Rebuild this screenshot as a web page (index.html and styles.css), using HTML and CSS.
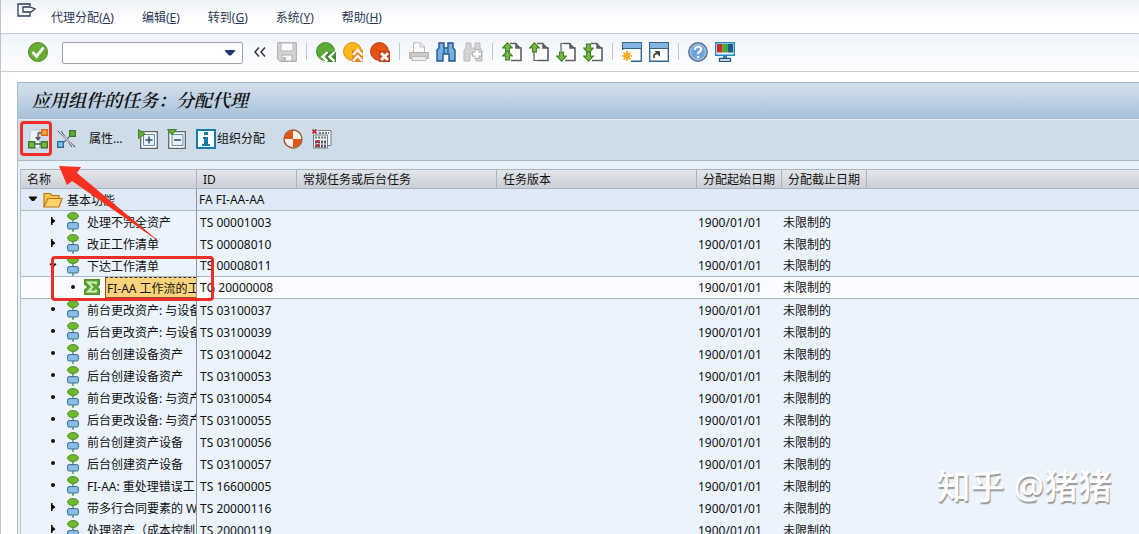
FILE: index.html
```html
<!DOCTYPE html>
<html lang="zh-CN">
<head>
<meta charset="utf-8">
<title>应用组件的任务：分配代理</title>
<link rel="stylesheet" href="styles.css">
</head>
<body>
<svg class="defs" aria-hidden="true">
  <symbol id="task" viewBox="0 0 12 20"><path d="M6 7v4M6 17v3" stroke="#5d8f35" stroke-width="1.4"/><ellipse cx="6" cy="4" rx="5.4" ry="3.4" fill="#72b82c" stroke="#4d8a2c"/><rect x=".6" y="10.6" width="10.8" height="6.4" rx="1.5" fill="#8abce6" stroke="#3b6c9c"/></symbol>
  <symbol id="page" viewBox="0 0 20 20"><path d="M7 1h7l5 5v13H7" fill="#fff"/><path d="M8 1.5h6M14 1v5h5v12.500H9" fill="none" stroke="#5b5f63" stroke-width="1.6"/><path d="M14 1l5 5h-5z" fill="#5b5f63"/></symbol>
  <symbol id="pagefull" viewBox="0 0 20 20"><use href="#page"/><path d="M5 9v9.500h5" fill="none" stroke="#5b5f63" stroke-width="1.2"/></symbol>
  <symbol id="up" viewBox="0 0 10 10"><path d="M5 .7l4.300 4.600H6.800V9H3.200V5.300H.7z" fill="#7bb843" stroke="#3f8228"/></symbol>
  <symbol id="down" viewBox="0 0 10 10"><path d="M5 9.300L.7 4.700h2.500V1h3.600v3.700h2.500z" fill="#7bb843" stroke="#3f8228"/></symbol>
  <symbol id="closed" viewBox="0 0 8 10"><path d="M2 1h1.500v1.500L6.500 5l-3 2.500V9H2z" fill="#111"/></symbol>
  <symbol id="open" viewBox="0 0 10 6"><path d="M1 .5h8v1L6 5H4L1 1.500z" fill="#111"/></symbol>
</svg>

<div class="window">
  <nav class="menu">
    <button class="sysmenu" aria-label="系统菜单"><svg width="20" height="16" viewBox="0 0 20 16"><path d="M13 3V1H1v12h12v-3M6 4h7l5 2-4 3H6z" fill="none" stroke="#2c3c5c" stroke-width="1.300"/></svg></button>
    <button>代理分配(<u>A</u>)</button>
    <button>编辑(<u>E</u>)</button>
    <button>转到(<u>G</u>)</button>
    <button>系统(<u>Y</u>)</button>
    <button>帮助(<u>H</u>)</button>
  </nav>

  <div class="toolbar">
    <button aria-label="确认"><svg width="20" height="20" viewBox="0 0 20 20"><circle cx="10" cy="10" r="9.500" fill="#66ad32" stroke="#55852d"/><path d="M4.500 10l4 4.300L15.500 5.500" fill="none" stroke="#fff" stroke-width="2.800"/></svg></button>
    <div class="command"><input type="text" aria-label="命令"><button aria-label="历史"><svg width="10" height="6" viewBox="0 0 10 6"><path d="M0 0h10v1L6 5.500H4L0 1z" fill="#22376b"/></svg></button></div>
    <button class="collapse" aria-label="收起"><svg width="12" height="10" viewBox="0 0 12 10"><path d="M5 .5L1 5l4 4.500M11 .5L7 5l4 4.500" fill="none" stroke="#333" stroke-width="1.500"/></svg></button>
    <button aria-label="保存"><svg width="20" height="20" viewBox="0 0 20 20"><path d="M.7.7h18.600v18.600H3L.7 17z" fill="#d3d3d5" stroke="#a5a5a9"/><path d="M4 1h12v8H4z" fill="#fafafa" stroke="#b6b6b8"/><path d="M5 13h10v6H5z" fill="#fff" stroke="#aaa"/><path d="M6 15h3v4H6z" fill="#bbb"/></svg></button>
    <span class="sep"></span>
    <button aria-label="返回"><svg width="20" height="20" viewBox="0 0 20 20"><circle cx="9.500" cy="9.500" r="9" fill="#5bab36" stroke="#468a2f"/><path d="M10 10h10v10H10z" fill="#3d862c"/><path d="M11.500 10L6.500 14.700l5 4.600M18.500 10l-5 4.700 5 4.600" fill="none" stroke="#fff" stroke-width="2.400"/></svg></button>
    <button aria-label="退出"><svg width="20" height="20" viewBox="0 0 20 20"><circle cx="9.500" cy="9.500" r="9" fill="#fcb817" stroke="#dc8a20"/><path d="M9 8h11v12H9z" fill="#e78822"/><path d="M10 13l4.700-5 4.700 5M10 19l4.700-5 4.700 5" fill="none" stroke="#fff" stroke-width="2.300"/></svg></button>
    <button aria-label="取消"><svg width="20" height="20" viewBox="0 0 20 20"><circle cx="9.500" cy="9.500" r="9" fill="#e25213" stroke="#bd431a"/><path d="M9 9h11v11H9z" fill="#c23c15"/><path d="M11 11l7 7M18 11l-7 7" stroke="#fff" stroke-width="3"/></svg></button>
    <span class="sep"></span>
    <button aria-label="打印"><svg width="20" height="20" viewBox="0 0 20 20"><path d="M4.500 11V.7h7l4 4V11M11 1v4h4" fill="#fafafa" stroke="#bbb"/><path d="M.7 10.500h18.600v6H.7z" fill="#ccc" stroke="#aaa"/><path d="M3 14.500h14v4H3z" fill="#eee" stroke="#bbb"/></svg></button>
    <button aria-label="查找"><svg width="20" height="20" viewBox="0 0 20 20"><path d="M1 19V8l2-2V1h5v5h4V1h5v5l2 2v11h-6v-7H7v7z" fill="#78afe0" stroke="#22588b" stroke-width="1.400"/><path d="M8 7v5M12 7v5" stroke="#2b669b" stroke-width="1.500"/></svg></button>
    <button aria-label="继续查找"><svg width="20" height="20" viewBox="0 0 20 20"><path d="M1 19V8l2-2V1h5v5h4V1h5v5l2 2v11h-6v-7H7v7z" fill="#d5d5d6" stroke="#b8b8ba"/><path d="M14 7v10M9 12h10" stroke="#b0b0b2" stroke-width="5"/><path d="M14 8v8M10 12h8" stroke="#fff" stroke-width="3"/></svg></button>
    <span class="sep"></span>
    <button aria-label="首页"><svg width="20" height="20"><use href="#page"/><use href="#up" width="11" height="11"/><use href="#up" y="8" width="11" height="11"/></svg></button>
    <button aria-label="上一页"><svg width="20" height="20"><use href="#pagefull"/><use href="#up" width="11" height="11"/></svg></button>
    <button aria-label="下一页"><svg width="20" height="20"><use href="#page"/><path d="M5 9V1.500h5" fill="none" stroke="#5b5f63" stroke-width="1.2"/><use href="#down" y="9" width="11" height="11"/></svg></button>
    <button aria-label="末页"><svg width="20" height="20"><use href="#page"/><use href="#down" y="1" width="11" height="11"/><use href="#down" y="9" width="11" height="11"/></svg></button>
    <span class="sep"></span>
    <button aria-label="新窗口"><svg width="20" height="20" viewBox="0 0 20 20"><path d="M.7.700h18.600v18.600H.7z" fill="#fff" stroke="#35668f" stroke-width="1.400"/><path d="M1 1h18v5H1z" fill="#84b4df"/><path d="M1 6.500h18" stroke="#35668f"/><path d="M0 8h9v12H0z" fill="#fff"/><path d="M5 9v10M0 14h10M1.500 10.500l7 7M8.500 10.500l-7 7" stroke="#f3a51d" stroke-width="1.700"/><circle cx="5" cy="14" r="3" fill="#f7ab22"/></svg></button>
    <button aria-label="快捷方式"><svg width="20" height="20" viewBox="0 0 20 20"><path d="M.7.700h18.600v18.600H.7z" fill="#fff" stroke="#35668f" stroke-width="1.400"/><path d="M1 1h18v5H1z" fill="#84b4df"/><path d="M1 6.500h18" stroke="#35668f"/><path d="M5 16c-.5-3 .5-4.500 4-5" fill="none" stroke="#444" stroke-width="1.800"/><path d="M5.500 9H11v6z" fill="#444"/></svg></button>
    <span class="sep"></span>
    <button aria-label="帮助"><svg width="20" height="20" viewBox="0 0 20 20"><circle cx="10" cy="10" r="9.300" fill="#72a4d3" stroke="#5d6f88" stroke-width="1.200"/><circle cx="10" cy="10" r="7.500" fill="none" stroke="#a8caea"/><path d="M6.800 8c0-4.500 6.700-4 6.400-.5-.2 2-3.100 2.200-3.100 4.500M10.100 14v2" fill="none" stroke="#fff" stroke-width="2.100"/></svg></button>
    <button aria-label="布局"><svg width="20" height="20" viewBox="0 0 20 20"><path d="M.7.700h18.600v12.600H.7z" fill="#e8f4fc" stroke="#2689c0" stroke-width="1.400"/><path d="M2 2h5.500v8.500H2z" fill="#cb2a25"/><path d="M7.500 2H13v8.500H7.500z" fill="#4aa934"/><path d="M13 2h5v8.500h-5z" fill="#185b91"/><path d="M8 14h4v3H8z" fill="#2689c0"/><path d="M4.500 16.500h11v2.800h-11z" fill="#fff" stroke="#235981" stroke-width="1.300"/></svg></button>
  </div>

  <main class="content">
    <h1>应用组件的任务：分配代理</h1>
    <div class="actions">
      <button class="marked" aria-label="分配代理"><svg width="20" height="20" viewBox="0 0 20 20"><path d="M3.500 1h8v18H2V3z" fill="#eef4fb" stroke="#b9c5d5"/><path d="M14 4h-4v6M5 15h10" fill="none" stroke="#555" stroke-width="1.300"/><path d="M7 8h6l-3 4z" fill="#555"/><path d="M13.700.7h5.600v5.600h-5.600z" fill="#fba64a" stroke="#d86c12" stroke-width="1.400"/><path d="M.7 12.700h6v6h-6zM13.300 12.700h6v6h-6z" fill="#74b944" stroke="#3d7d2a" stroke-width="1.400"/></svg></button>
      <button aria-label="删除分配"><svg width="20" height="20" viewBox="0 0 20 20"><path d="M4 2l11 16M1 2l17 16M6 14L14 6" stroke="#5c6470" stroke-width="1.100"/><path d="M2 2l14 15" stroke="#f2f5f8"/><path d="M12.700 1.700h5.600v5.600h-5.600z" fill="#67ac39" stroke="#39782b" stroke-width="1.300"/><path d="M.7 12.700h5.600v5.600H.7z" fill="#8ac1ec" stroke="#22679e" stroke-width="1.300"/></svg></button>
      <button class="props">属性…</button>
      <button aria-label="展开"><svg width="20" height="20" viewBox="0 0 20 20"><path d="M2.700 2.700h16.600v16.600H2.700z" fill="#fff" stroke="#60666e" stroke-width="1.300"/><path d="M5.500 5.500h11v11h-11z" fill="#e7f1fa" stroke="#5d8cae"/><path d="M11 7.500v7M7.500 11h7" stroke="#284f75" stroke-width="1.500"/><path d="M.5.500L7 5 .5 9.500z" fill="#63ad37" stroke="#3f802a"/></svg></button>
      <button aria-label="折叠"><svg width="20" height="20" viewBox="0 0 20 20"><path d="M1.700 2.700h16.600v16.600H1.700z" fill="#fff" stroke="#60666e" stroke-width="1.300"/><path d="M5 5.500h11v11H5z" fill="#e7f1fa" stroke="#5d8cae"/><path d="M7 11h7" stroke="#284f75" stroke-width="1.500"/><path d="M.5.500h9L5 6z" fill="#63ad37" stroke="#3f802a"/></svg></button>
      <button class="labelled"><svg width="20" height="20" viewBox="0 0 20 20"><path d="M1 1h18v18H1z" fill="#fff" stroke="#147eab" stroke-width="2"/><path d="M8 3h4v3H8zM7 8h5v7h2v2H6v-2h2v-5H7z" fill="#127ca9"/></svg>组织分配</button>
      <button class="apart" aria-label="图表"><svg width="20" height="20" viewBox="0 0 20 20"><circle cx="10" cy="10" r="9" fill="#f7f3ed" stroke="#9b5835" stroke-width="1.400"/><path d="M10 10V1.500A8.500 8.500 0 0 0 1.500 10zM10 10h8.500A8.500 8.500 0 0 1 10 18.500z" fill="#df5818"/></svg></button>
      <button aria-label="日历"><svg width="20" height="20" viewBox="0 0 20 20"><path d="M6 1.500h13v15h-3M1.500 6h14v13h-14z" fill="#eef1f4" stroke="#777c82"/><path d="M7 4h10M3 8.500h11" stroke="#6f7880" stroke-width="2" stroke-dasharray="2 1"/><path d="M3 13h12M3 17h12" stroke="#4f5967" stroke-width="3" stroke-dasharray="2 1"/><path d="M6 11v8" stroke="#c52f39" stroke-width="3" stroke-dasharray="3 1"/><path d="M.5.500l4 4M4.500.5l-4 4" stroke="#b92032" stroke-width="1.700"/></svg></button>
    </div>

    <div class="tree">
      <table>
        <colgroup><col class="c-name"><col class="c-id"><col class="c-task"><col class="c-task"><col class="c-date"><col class="c-date"><col></colgroup>
        <thead><tr><th>名称</th><th>ID</th><th>常规任务或后台任务</th><th>任务版本</th><th>分配起始日期</th><th>分配截止日期</th><th></th></tr></thead>
        <tbody>
          <tr class="group"><td><div class="node root"><svg class="mark"><use href="#open" width="10" height="6" y="2"/></svg><svg class="folder" viewBox="0 0 20 16"><path d="M1 15V1.500h6l2 2h7V6" fill="#fcc64b" stroke="#b87915" stroke-width="1.200"/><path d="M1 15l4-8.500h14L16 15z" fill="#ffd36a" stroke="#b87915" stroke-width="1.200"/></svg><span>基本功能</span></div></td><td>FA FI-AA-AA</td><td></td><td></td><td></td><td></td><td></td></tr>
          <tr><td><div class="node"><svg class="mark"><use href="#closed"/></svg><svg class="task"><use href="#task"/></svg><span>处理不完全资产</span></div></td><td>TS 00001003</td><td></td><td></td><td>1900/01/01</td><td>未限制的</td><td></td></tr>
          <tr><td><div class="node"><svg class="mark"><use href="#closed"/></svg><svg class="task"><use href="#task"/></svg><span>改正工作清单</span></div></td><td>TS 00008010</td><td></td><td></td><td>1900/01/01</td><td>未限制的</td><td></td></tr>
          <tr class="before"><td><div class="node"><svg class="mark"><use href="#open" width="8" height="5" y="3"/></svg><svg class="task"><use href="#task"/></svg><span>下达工作清单</span></div></td><td>TS 00008011</td><td></td><td></td><td>1900/01/01</td><td>未限制的</td><td></td></tr>
          <tr class="selected"><td><div class="node child"><i class="dot"></i><svg class="sigma" viewBox="0 0 16 16"><path d="M0 0h16v6h-2v4h2v6H0v-5l4-3-4-3z" fill="#58a531" stroke="#41842d"/><path d="M12 5.500V3.500H4L8.500 8 4 12.500h8v-2" fill="none" stroke="#d8efc0" stroke-width="1.800"/></svg><span class="hit">FI-AA 工作流的工</span></div></td><td>TG 20000008</td><td></td><td></td><td>1900/01/01</td><td>未限制的</td><td></td></tr>
          <tr><td><div class="node"><i class="dot"></i><svg class="task"><use href="#task"/></svg><span>前台更改资产: 与设备</span></div></td><td>TS 03100037</td><td></td><td></td><td>1900/01/01</td><td>未限制的</td><td></td></tr>
          <tr><td><div class="node"><i class="dot"></i><svg class="task"><use href="#task"/></svg><span>后台更改资产: 与设备</span></div></td><td>TS 03100039</td><td></td><td></td><td>1900/01/01</td><td>未限制的</td><td></td></tr>
          <tr><td><div class="node"><i class="dot"></i><svg class="task"><use href="#task"/></svg><span>前台创建设备资产</span></div></td><td>TS 03100042</td><td></td><td></td><td>1900/01/01</td><td>未限制的</td><td></td></tr>
          <tr><td><div class="node"><i class="dot"></i><svg class="task"><use href="#task"/></svg><span>后台创建设备资产</span></div></td><td>TS 03100053</td><td></td><td></td><td>1900/01/01</td><td>未限制的</td><td></td></tr>
          <tr><td><div class="node"><i class="dot"></i><svg class="task"><use href="#task"/></svg><span>前台更改设备: 与资产</span></div></td><td>TS 03100054</td><td></td><td></td><td>1900/01/01</td><td>未限制的</td><td></td></tr>
          <tr><td><div class="node"><i class="dot"></i><svg class="task"><use href="#task"/></svg><span>后台更改设备: 与资产</span></div></td><td>TS 03100055</td><td></td><td></td><td>1900/01/01</td><td>未限制的</td><td></td></tr>
          <tr><td><div class="node"><i class="dot"></i><svg class="task"><use href="#task"/></svg><span>前台创建资产设备</span></div></td><td>TS 03100056</td><td></td><td></td><td>1900/01/01</td><td>未限制的</td><td></td></tr>
          <tr><td><div class="node"><i class="dot"></i><svg class="task"><use href="#task"/></svg><span>后台创建资产设备</span></div></td><td>TS 03100057</td><td></td><td></td><td>1900/01/01</td><td>未限制的</td><td></td></tr>
          <tr><td><div class="node"><i class="dot"></i><svg class="task"><use href="#task"/></svg><span>FI-AA: 重处理错误工</span></div></td><td>TS 16600005</td><td></td><td></td><td>1900/01/01</td><td>未限制的</td><td></td></tr>
          <tr><td><div class="node"><svg class="mark"><use href="#closed"/></svg><svg class="task"><use href="#task"/></svg><span>带多行合同要素的 W</span></div></td><td>TS 20000116</td><td></td><td></td><td>1900/01/01</td><td>未限制的</td><td></td></tr>
          <tr><td><div class="node"><svg class="mark"><use href="#closed"/></svg><svg class="task"><use href="#task"/></svg><span>处理资产（成本控制</span></div></td><td>TS 20000119</td><td></td><td></td><td>1900/01/01</td><td>未限制的</td><td></td></tr>
        </tbody>
      </table>
    </div>
  </main>
</div>

<div class="box box-tool"></div>
<div class="box box-row"></div>
<svg class="arrow" width="104" height="80" viewBox="0 0 104 80" aria-hidden="true"><path d="M0 1l22 1-4 6 84 70L13 16l-5 4z" fill="#f8301f"/></svg>
<div class="watermark">知乎 @猪猪</div>
</body>
</html>
```
FILE: styles.css
```css
* { box-sizing: border-box; }
body {
  margin: 0;
  height: 100vh;
  overflow: hidden;
  position: relative;
  font: 12px/18px "Noto Sans", "Noto Sans CJK SC", sans-serif;
  color: #111;
  background: #fff;
}
.defs { position: absolute; width: 0; height: 0; }
svg { display: block; flex: none; }
button {
  display: flex;
  align-items: center;
  border: 0;
  padding: 0;
  background: none;
  font: inherit;
  color: inherit;
  white-space: nowrap;
}
.window {
  display: flex;
  flex-direction: column;
  height: 100%;
  border-left: 1px solid #bfc2ce;
}
.menu {
  display: flex;
  align-items: center;
  gap: 28px;
  height: 34px;
  padding: 2px 0 0 16px;
  color: #2b3854;
  background: linear-gradient(#eef2f8, #fff 60%);
  border-bottom: 1px solid #c3cad3;
}
.sysmenu { margin: 0 -14px 14px 0; }
.toolbar {
  display: flex;
  align-items: center;
  gap: 7px;
  height: 38px;
  padding: 0 0 2px 27px;
  background: linear-gradient(#eff4fa, #fff);
  border-bottom: 1px solid #c9cfd6;
}
.command {
  display: flex;
  width: 181px;
  height: 22px;
  margin: 2px 4px 0 7px;
  padding-right: 7px;
  border: 1px solid #9da3aa;
  border-radius: 2px;
  background: #fff;
}
.command input {
  flex: 1;
  min-width: 0;
  border: 0;
  padding: 0 4px;
  outline: 0;
  background: none;
  font: inherit;
}
.collapse { margin-right: 4px; }
.sep {
  width: 5px;
  height: 17px;
  background: linear-gradient(#b3cbdc, #b3cbdc) center / 1px 100% no-repeat;
}
.content {
  flex: 1;
  display: flex;
  flex-direction: column;
  min-height: 0;
  margin: 10px 0 0 16px;
  border-left: 1px solid #aebdcd;
  background: #e8f0f9;
}
h1 {
  flex: none;
  height: 37px;
  margin: 0;
  padding-left: 14px;
  font: italic 600 18px/33px "Noto Serif CJK SC", "Noto Sans CJK SC", sans-serif;
  background: linear-gradient(#d4e0ec, #a6c1d9);
  border-top: 1px solid #a1b4c7;
}
.actions {
  flex: none;
  display: flex;
  align-items: center;
  gap: 9px;
  height: 42px;
  padding: 0 0 2px 10px;
  background: #cddce7;
  border-top: 1px solid #e4edf4;
  border-bottom: 1px solid #a9b6c6;
}
.props { margin: 0 0 0 3px; width: 40px; }
.labelled { gap: 1px; }
.apart { margin-left: 9px; }
.tree {
  flex: 1;
  min-height: 0;
  overflow: hidden;
  margin: 8px 0 0 2px;
  border-left: 1px solid #b4bfcd;
  background: #ebf3fc;
}
table {
  width: 100%;
  table-layout: fixed;
  border-collapse: separate;
  border-spacing: 0;
}
.c-name { width: 176px; }
.c-id { width: 100px; }
.c-task { width: 200px; }
.c-date { width: 85px; }
th {
  height: 20px;
  padding: 2px 0 0 6px;
  line-height: 16px;
  font-weight: 400;
  text-align: left;
  white-space: nowrap;
  background: linear-gradient(#e3e6ea, #cbd0d6);
  border: solid #a9b4c1;
  border-width: 1px 1px 1px 0;
}
th:last-child { border-right: 0; }
td {
  height: 22px;
  padding: 1px 0 0 3px;
  line-height: 20px;
  white-space: nowrap;
}
td:nth-child(5), td:nth-child(6) { padding-left: 1px; }
td:first-child { padding: 0; border-right: 1px solid #8c95a2; }
.group td { background: #e0eaf6; border-bottom: 1px solid #a9b7c7; padding-left: 2px; }
.group td:first-child { padding: 0; }
.before td { border-bottom: 1px solid #a9b7c7; }
.selected td { background: #fafcff; border-bottom: 1px solid #a9b7c7; }
.node {
  display: flex;
  align-items: center;
  height: 21px;
  padding-left: 28px;
  overflow: hidden;
}
.node span { padding: 2px 0 0 8px; }
.mark { width: 8px; height: 10px; margin: 0 10px 2px 0; }
.mark use { width: 8px; height: 10px; }
.task { width: 12px; height: 20px; }
.dot {
  flex: none;
  width: 4px;
  height: 4px;
  margin: 0 12px 2px 2px;
  border-radius: 50%;
  background: #111;
}
.root { padding-left: 7px; }
.root .mark { width: 10px; margin-right: 5px; }
.folder { width: 20px; height: 16px; }
.node.root span { padding-left: 4px; }
.child { padding-left: 48px; }
.child .dot { margin-right: 9px; }
.sigma { width: 16px; height: 16px; margin-bottom: 2px; }
.node .hit {
  flex: 1;
  height: 21px;
  margin-left: 5px;
  padding: 1px 0 0 1px;
  background: #fbd47c;
  border: 1px solid #a34b20;
  border-top: 1px dashed #333;
}
.box {
  position: absolute;
  border: 3px solid #ec2e26;
  border-radius: 4px;
}
.box-tool { left: 20px; top: 121px; width: 32px; height: 35px; }
.box-row { left: 51px; top: 256px; width: 163px; height: 45px; }
.arrow { position: absolute; left: 59px; top: 165px; }
.watermark {
  position: absolute;
  right: 27px;
  bottom: 24px;
  font: 500 34px/48px "Noto Sans", "Noto Sans CJK SC", sans-serif;
  color: #fff;
  text-shadow: 1px 2px 1px #999;
}
```
